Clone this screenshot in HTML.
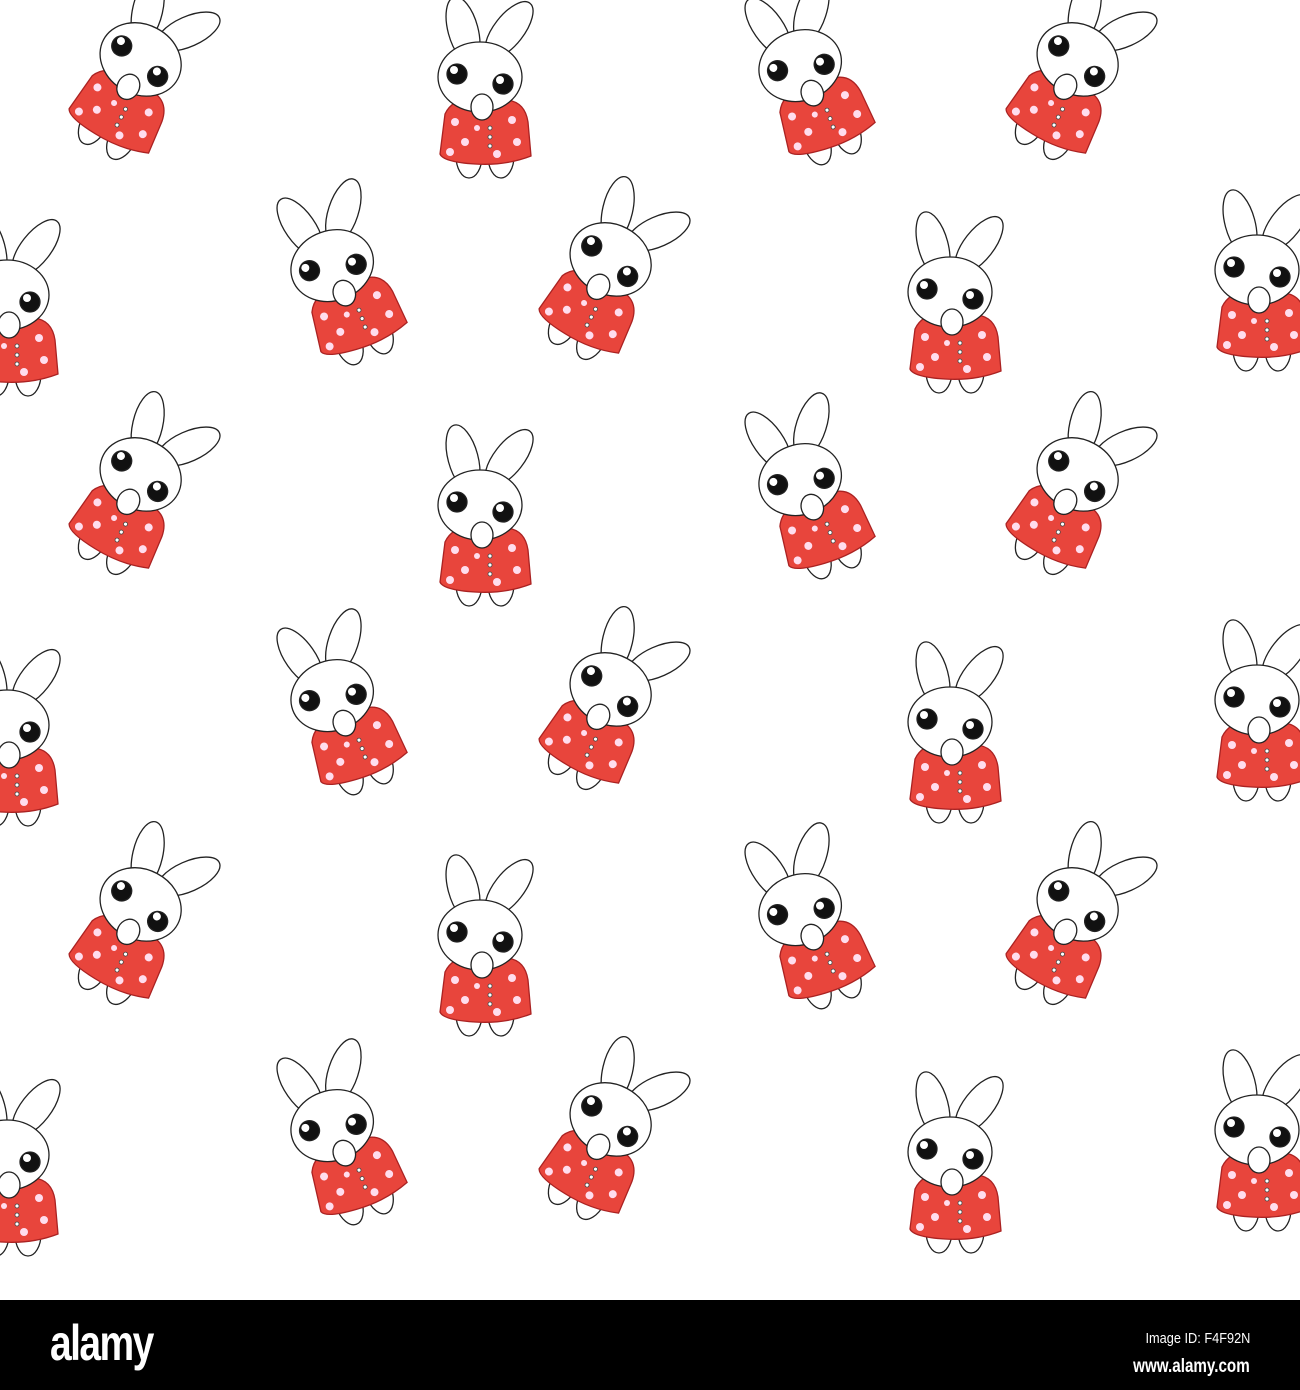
<!DOCTYPE html>
<html><head><style>
html,body{margin:0;padding:0;background:#fff;width:1300px;height:1390px;overflow:hidden}
svg{display:block;position:absolute;left:0;top:0}
.bar{position:absolute;left:0;top:1300px;width:1300px;height:90px;background:#000;color:#fff;font-family:"Liberation Sans",sans-serif}
.logo{position:absolute;left:50px;top:14px;font-size:50px;font-weight:bold;letter-spacing:-2px;transform:scaleX(0.78);transform-origin:left}
.id{position:absolute;right:50px;top:30px;font-size:15px;transform:scaleX(0.85);transform-origin:right}
.www{position:absolute;right:50px;top:56px;font-size:19px;font-weight:bold;transform:scaleX(0.8);transform-origin:right}
</style></head><body>
<svg width="1300" height="1300" viewBox="0 0 1300 1300">
<defs>
<g id="b" stroke="#222" stroke-width="1.3">
<ellipse cx="-16" cy="64" rx="13" ry="22" fill="#fff"/>
<ellipse cx="16" cy="64" rx="13" ry="22" fill="#fff"/>
<ellipse cx="-22" cy="-62" rx="15" ry="34" transform="rotate(-15 -22 -62)" fill="#fff"/>
<ellipse cx="24" cy="-62" rx="15" ry="34" transform="rotate(38 24 -62)" fill="#fff"/>
<path d="M-40 22 Q-32 5 -10 8 L22 8 Q40 10 43 30 L46 64 Q20 74 -10 72 Q-42 70 -45 62 Z" fill="#e8453c" stroke="#a22"/>
<ellipse cx="-5" cy="-15" rx="42" ry="35" fill="#fff"/>
<circle cx="-28" cy="-18" r="10" fill="#111"/>
<circle cx="18" cy="-8" r="10" fill="#111"/>
<circle cx="-31" cy="-22" r="4" fill="#fff" stroke="none"/>
<circle cx="15" cy="-12" r="4" fill="#fff" stroke="none"/>
<ellipse cx="-3" cy="15" rx="11" ry="13" fill="#fff"/>
<g fill="#fde" stroke="none">
<circle cx="-30" cy="30" r="4"/><circle cx="27" cy="28" r="4"/><circle cx="-20" cy="50" r="4"/><circle cx="32" cy="50" r="4"/><circle cx="12" cy="62" r="4"/><circle cx="-35" cy="60" r="4"/><circle cx="-8" cy="36" r="3"/>
</g>
<g fill="#fff" stroke="#444" stroke-width="0.8"><circle cx="5" cy="36" r="2"/><circle cx="5" cy="45" r="2"/><circle cx="5" cy="54" r="2"/></g>
</g>
</defs>
<g>
<use href="#b" transform="translate(485,92)"/>
<use href="#b" transform="translate(485,520)"/>
<use href="#b" transform="translate(485,950)"/>
<use href="#b" transform="translate(955,307)"/>
<use href="#b" transform="translate(955,737)"/>
<use href="#b" transform="translate(955,1167)"/>
<use href="#b" transform="translate(1262,285)"/>
<use href="#b" transform="translate(1262,715)"/>
<use href="#b" transform="translate(1262,1145)"/>
<use href="#b" transform="translate(12,310)"/>
<use href="#b" transform="translate(12,740)"/>
<use href="#b" transform="translate(12,1170)"/>
<use href="#b" transform="translate(138,75) rotate(28)"/>
<use href="#b" transform="translate(138,490) rotate(28)"/>
<use href="#b" transform="translate(138,920) rotate(28)"/>
<use href="#b" transform="translate(1075,75) rotate(28)"/>
<use href="#b" transform="translate(1075,490) rotate(28)"/>
<use href="#b" transform="translate(1075,920) rotate(28)"/>
<use href="#b" transform="translate(608,275) rotate(28)"/>
<use href="#b" transform="translate(608,705) rotate(28)"/>
<use href="#b" transform="translate(608,1135) rotate(28)"/>
<use href="#b" transform="translate(342,278) rotate(-20)"/>
<use href="#b" transform="translate(342,708) rotate(-20)"/>
<use href="#b" transform="translate(342,1138) rotate(-20)"/>
<use href="#b" transform="translate(810,78) rotate(-20)"/>
<use href="#b" transform="translate(810,492) rotate(-20)"/>
<use href="#b" transform="translate(810,922) rotate(-20)"/>
</g>
</svg>
<div class="bar"><div class="logo">alamy</div><div class="id">Image ID: F4F92N</div><div class="www">www.alamy.com</div></div>
</body></html>
